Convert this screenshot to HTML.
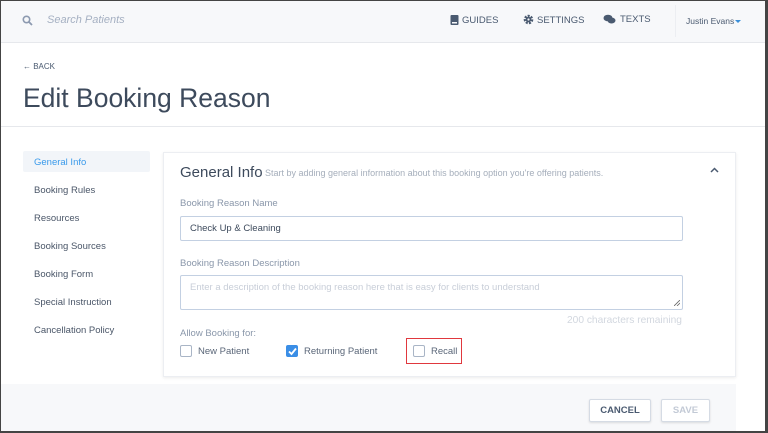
<!DOCTYPE html>
<html><head><meta charset="utf-8"><style>
*{box-sizing:border-box;margin:0;padding:0}
body{width:768px;height:433px;overflow:hidden;font-family:"Liberation Sans",sans-serif;background:#fff;position:relative}
.frame{position:absolute;inset:0;border:1px solid #444;border-right:3px solid #444;border-bottom:2px solid #444;pointer-events:none;z-index:10}
.top{position:absolute;left:0;top:0;width:768px;height:43px;background:#f7f8fa;border-bottom:1px solid #e6e8ec}
.a{position:absolute;font-size:9.5px;color:#4a5a70}
.lbl{position:absolute;font-size:9.5px;color:#8a97aa}
.nav{position:absolute;left:34px;font-size:9.5px;color:#4a5668}
.box{position:absolute;border:1px solid #c3d0e2;border-radius:2px;background:#fff}
.cb{position:absolute;width:12px;height:12px;border:1px solid #a9b5c6;border-radius:2px;background:#fff}
.btn{position:absolute;height:23px;border:1px solid #d5dbe4;border-radius:2px;background:#fff;font-size:9.5px;font-weight:bold;text-align:center;line-height:21px;box-shadow:0 1px 2px rgba(0,0,0,.12)}
</style></head><body>
<div class="frame"></div>
<div class="top">
<svg style="position:absolute;left:22px;top:15px" width="11" height="11" viewBox="0 0 11 11"><circle cx="4.5" cy="4.5" r="3.2" fill="none" stroke="#8d9ab0" stroke-width="1.6"/><line x1="7" y1="7" x2="10" y2="10" stroke="#8d9ab0" stroke-width="1.8"/></svg>
<div style="position:absolute;left:47px;top:14px;font-size:11px;font-style:italic;color:#a5b0c2">Search Patients</div>
<svg style="position:absolute;left:450px;top:15px" width="9" height="10"><rect x="0.5" y="0" width="8" height="10" rx="1" fill="#4a5a70"/><rect x="2" y="7" width="5" height="1.5" fill="#f7f8fa"/></svg>
<div class="a" style="left:462px;top:15px">GUIDES</div>
<svg style="position:absolute;left:523px;top:14px" width="11" height="11" viewBox="0 0 11 11"><circle cx="5.5" cy="5.5" r="3.6" fill="none" stroke="#4a5a70" stroke-width="2.4" stroke-dasharray="2 1.2"/><circle cx="5.5" cy="5.5" r="2.8" fill="#4a5a70"/><circle cx="5.5" cy="5.5" r="1.1" fill="#f7f8fa"/></svg>
<div class="a" style="left:537px;top:15px">SETTINGS</div>
<svg style="position:absolute;left:603px;top:14px" width="13" height="11"><ellipse cx="5" cy="4" rx="4.5" ry="3.3" fill="#4a5a70"/><ellipse cx="8.5" cy="6.5" rx="4" ry="3" fill="#4a5a70"/></svg>
<div class="a" style="left:620px;top:14px">TEXTS</div>
<div style="position:absolute;left:675px;top:5px;width:1px;height:32px;background:#eceef2"></div>
<div style="position:absolute;left:686px;top:16px;font-size:8.5px;color:#4a5a70">Justin Evans</div>
<div style="position:absolute;left:735px;top:20px;border:3px solid transparent;border-top:3px solid #3b8fd9"></div>
</div>
<div style="position:absolute;left:23px;top:62px;font-size:8px;color:#4a5a70">← BACK</div>
<div style="position:absolute;left:23px;top:83px;font-size:26.5px;color:#3d4a5c">Edit Booking Reason</div>
<div style="position:absolute;left:0;top:126px;width:768px;height:1px;background:#e6e8ec"></div>
<div style="position:absolute;left:23px;top:151px;width:127px;height:21px;background:#f2f5f9;border-radius:2px"></div>
<div class="nav" style="top:157px;color:#3a9aeb">General Info</div>
<div class="nav" style="top:185px">Booking Rules</div>
<div class="nav" style="top:213px">Resources</div>
<div class="nav" style="top:241px">Booking Sources</div>
<div class="nav" style="top:269px">Booking Form</div>
<div class="nav" style="top:297px">Special Instruction</div>
<div class="nav" style="top:325px">Cancellation Policy</div>
<div style="position:absolute;left:0;top:384px;width:736px;height:49px;background:#f7f8fa"></div>
<div style="position:absolute;left:163px;top:152px;width:573px;height:225px;background:#fff;border:1px solid #eceef2;box-shadow:0 1px 3px rgba(0,0,0,.08)">
<div style="position:absolute;left:16px;top:11px;font-size:15px;color:#3d4a5c">General Info</div>
<div style="position:absolute;left:101px;top:15px;font-size:9px;color:#a5aebb">Start by adding general information about this booking option you're offering patients.</div>
<svg style="position:absolute;left:546px;top:14px" width="9" height="6"><polyline points="1,5 4.5,1.5 8,5" fill="none" stroke="#4a5a70" stroke-width="1.5"/></svg>
</div>
<div class="lbl" style="left:180px;top:198px">Booking Reason Name</div>
<div class="box" style="left:180px;top:216px;width:503px;height:25px"></div>
<div style="position:absolute;left:190px;top:223px;font-size:9.5px;color:#3d4a5c">Check Up &amp; Cleaning</div>
<div class="lbl" style="left:180px;top:258px">Booking Reason Description</div>
<div class="box" style="left:180px;top:275px;width:503px;height:35px"></div>
<svg style="position:absolute;left:674px;top:300px" width="6" height="6"><line x1="0" y1="6" x2="6" y2="0" stroke="#666" stroke-width="0.8"/><line x1="3" y1="6" x2="6" y2="3" stroke="#666" stroke-width="0.8"/></svg>
<div style="position:absolute;left:190px;top:282px;font-size:9.5px;color:#c8ced8">Enter a description of the booking reason here that is easy for clients to understand</div>
<div style="position:absolute;left:567px;top:315px;font-size:10.2px;color:#d2d7df">200 characters remaining</div>
<div class="lbl" style="left:180px;top:328px">Allow Booking for:</div>
<div class="cb" style="left:180px;top:345px"></div>
<div style="position:absolute;left:198px;top:346px;font-size:9.5px;color:#5a6678">New Patient</div>
<div class="cb" style="left:286px;top:345px;background:#3a8ee6;border-color:#3a8ee6"></div>
<svg style="position:absolute;left:287px;top:346px" width="11" height="11"><polyline points="2,5.5 4.5,8 9,2.5" fill="none" stroke="#fff" stroke-width="1.8"/></svg>
<div style="position:absolute;left:304px;top:346px;font-size:9.5px;color:#5a6678">Returning Patient</div>
<div style="position:absolute;left:406px;top:338px;width:56px;height:26px;border:1.5px solid #e0383e"></div>
<div class="cb" style="left:413px;top:345px"></div>
<div style="position:absolute;left:431px;top:346px;font-size:9.5px;color:#5a6678">Recall</div>
<div class="btn" style="left:589px;top:399px;width:62px;color:#4a5a70">CANCEL</div>
<div class="btn" style="left:661px;top:399px;width:49px;color:#c3cad6">SAVE</div>
</body></html>
